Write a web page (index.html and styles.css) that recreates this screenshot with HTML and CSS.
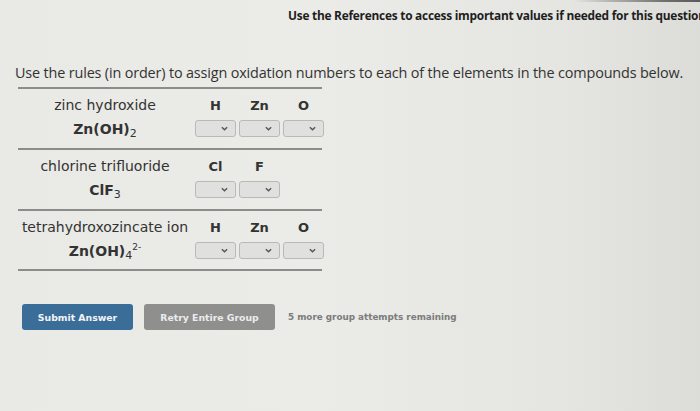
FILE: index.html
```html
<!DOCTYPE html>
<html>
<head>
<meta charset="utf-8">
<link rel="stylesheet" href="styles.css">
</head>
<body>
<div class="page">
  <div class="refs">Use the References to access important values if needed for this question.</div>
  <p class="prompt">Use the rules (in order) to assign oxidation numbers to each of the elements in the compounds below.</p>
  <div class="table">
    <div class="row">
      <div class="name">zinc hydroxide</div>
      <div class="el">H</div><div class="el">Zn</div><div class="el">O</div>
      <div class="formula">Zn(OH)<sub>2</sub></div>
      <div class="sel"><svg viewBox="0 0 8 5"><polyline points="1,1 4,4 7,1"/></svg></div>
      <div class="sel"><svg viewBox="0 0 8 5"><polyline points="1,1 4,4 7,1"/></svg></div>
      <div class="sel"><svg viewBox="0 0 8 5"><polyline points="1,1 4,4 7,1"/></svg></div>
    </div>
    <div class="row">
      <div class="name">chlorine trifluoride</div>
      <div class="el">Cl</div><div class="el">F</div><div class="el"></div>
      <div class="formula">ClF<sub>3</sub></div>
      <div class="sel"><svg viewBox="0 0 8 5"><polyline points="1,1 4,4 7,1"/></svg></div>
      <div class="sel"><svg viewBox="0 0 8 5"><polyline points="1,1 4,4 7,1"/></svg></div>
      <div></div>
    </div>
    <div class="row">
      <div class="name">tetrahydroxozincate ion</div>
      <div class="el">H</div><div class="el">Zn</div><div class="el">O</div>
      <div class="formula">Zn(OH)<sub>4</sub><sup>2-</sup></div>
      <div class="sel"><svg viewBox="0 0 8 5"><polyline points="1,1 4,4 7,1"/></svg></div>
      <div class="sel"><svg viewBox="0 0 8 5"><polyline points="1,1 4,4 7,1"/></svg></div>
      <div class="sel"><svg viewBox="0 0 8 5"><polyline points="1,1 4,4 7,1"/></svg></div>
    </div>
  </div>
  <div class="actions">
    <button class="btn submit">Submit Answer</button>
    <button class="btn retry">Retry Entire Group</button>
    <span class="remain">5 more group attempts remaining</span>
  </div>
</div>
</body>
</html>
```
FILE: styles.css
```css
html, body {
  margin: 0;
  height: 100%;
}
body {
  background:
    linear-gradient(90deg, rgba(0,0,0,0) 0%, rgba(0,0,0,0) 82%, #6f6f6f 95%, #5a5a5a 100%) top / 100% 2px no-repeat,
    linear-gradient(90deg, #e9e9e5 0%, #ebebe7 45%, #e5e5e1 80%, #dcdcd8 100%);
  overflow: hidden;
  font-family: "DejaVu Sans", Verdana, sans-serif;
  color: #2a2a2a;
}
.page {
  padding-top: 7px;
}
.refs {
  margin-left: 288px;
  white-space: nowrap;
  font-family: "Open Sans", sans-serif;
  font-weight: 700;
  font-size: 11.9px;
  letter-spacing: -0.25px;
  line-height: 16px;
  color: #1e1e1e;
}
.prompt {
  margin: 40px 0 0 15px;
  white-space: nowrap;
  font-family: "Open Sans", sans-serif;
  font-size: 14.4px;
  letter-spacing: -0.15px;
  line-height: 20px;
  color: #333;
}
.table {
  margin: 4px 0 0 18px;
  width: 304px;
  border-top: 2px solid #8c8c8a;
}
.row {
  display: grid;
  grid-template-columns: 174px 41px 41px 41px;
  grid-template-rows: 18px 17px;
  column-gap: 3px;
  row-gap: 6px;
  padding: 7px 0 11px;
  border-bottom: 2px solid #8c8c8a;
  align-items: center;
}
.row:last-child {
  padding-bottom: 10px;
}
.name {
  text-align: center;
  font-size: 14px;
  color: #333;
  white-space: nowrap;
}
.formula {
  text-align: center;
  font-weight: 700;
  font-size: 14px;
  color: #333;
  grid-column: 1;
  white-space: nowrap;
}
.formula sub {
  font-size: 11px;
  font-weight: 400;
  vertical-align: -3px;
  line-height: 0;
}
.formula sup {
  font-size: 9px;
  font-weight: 400;
  vertical-align: 6px;
  line-height: 0;
}
.el {
  text-align: center;
  font-weight: 700;
  font-size: 13px;
  color: #333;
}
.sel {
  height: 17px;
  box-sizing: border-box;
  background: #e0e0de;
  border: 1px solid #b9b9b7;
  border-radius: 3px;
  display: flex;
  align-items: center;
  justify-content: flex-end;
  padding-right: 7px;
}
.sel svg {
  width: 7px;
  height: 5px;
  fill: none;
  stroke: #555;
  stroke-width: 1.6;
}
.actions {
  display: flex;
  align-items: center;
  margin: 33px 0 0 22px;
}
.btn {
  border: none;
  border-radius: 3px;
  height: 26px;
  font-family: "DejaVu Sans", Verdana, sans-serif;
  font-weight: 700;
  font-size: 9.3px;
  padding: 0;
}
.submit {
  width: 111px;
  background: #3b6d99;
  color: #f2f4f7;
}
.retry {
  width: 131px;
  margin-left: 11px;
  background: #8f8f8e;
  color: #ececec;
}
.remain {
  margin-left: 13px;
  font-weight: 700;
  font-size: 8.8px;
  color: #7c7c7c;
}
```
